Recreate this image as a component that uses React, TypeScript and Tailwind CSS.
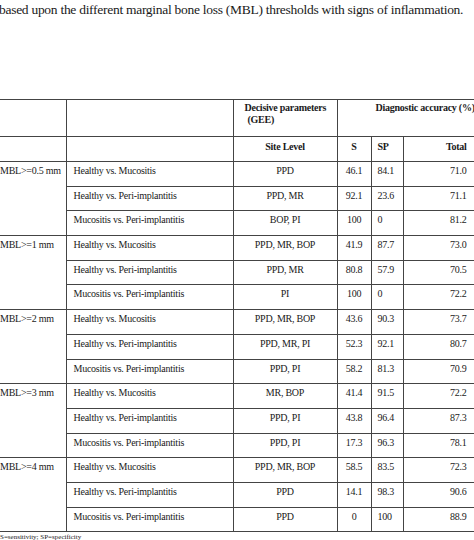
import React from "react";

type Row = [string, string, string, string, string];

const groups: { label: string; rows: Row[] }[] = [
  {
    label: "MBL>=0.5 mm",
    rows: [
      ["Healthy vs. Mucositis", "PPD", "46.1", "84.1", "71.0"],
      ["Healthy vs. Peri-implantitis", "PPD, MR", "92.1", "23.6", "71.1"],
      ["Mucositis vs. Peri-implantitis", "BOP, PI", "100", "0", "81.2"],
    ],
  },
  {
    label: "MBL>=1 mm",
    rows: [
      ["Healthy vs. Mucositis", "PPD, MR, BOP", "41.9", "87.7", "73.0"],
      ["Healthy vs. Peri-implantitis", "PPD, MR", "80.8", "57.9", "70.5"],
      ["Mucositis vs. Peri-implantitis", "PI", "100", "0", "72.2"],
    ],
  },
  {
    label: "MBL>=2 mm",
    rows: [
      ["Healthy vs. Mucositis", "PPD, MR, BOP", "43.6", "90.3", "73.7"],
      ["Healthy vs. Peri-implantitis", "PPD, MR, PI", "52.3", "92.1", "80.7"],
      ["Mucositis vs. Peri-implantitis", "PPD, PI", "58.2", "81.3", "70.9"],
    ],
  },
  {
    label: "MBL>=3 mm",
    rows: [
      ["Healthy vs. Mucositis", "MR, BOP", "41.4", "91.5", "72.2"],
      ["Healthy vs. Peri-implantitis", "PPD, PI", "43.8", "96.4", "87.3"],
      ["Mucositis vs. Peri-implantitis", "PPD, PI", "17.3", "96.3", "78.1"],
    ],
  },
  {
    label: "MBL>=4 mm",
    rows: [
      ["Healthy vs. Mucositis", "PPD, MR, BOP", "58.5", "83.5", "72.3"],
      ["Healthy vs. Peri-implantitis", "PPD", "14.1", "98.3", "90.6"],
      ["Mucositis vs. Peri-implantitis", "PPD", "0", "100", "88.9"],
    ],
  },
];

const line = "border-[#444]";

export default function App() {
  return (
    <div className="w-[474px] h-[540px] overflow-hidden bg-white text-[#1a1a1a] font-[family-name:Liberation_Serif,serif]">
      <p className="-ml-[1px] pt-[1px] text-[13.5px] leading-[17px] tracking-[-0.28px] whitespace-nowrap">
        based upon the different marginal bone loss (MBL) thresholds with signs of inflammation.
      </p>

      <table className="mt-[81px] w-[478px] table-fixed border-collapse text-[10px] leading-[12px] tracking-[-0.25px]">
        <colgroup>
          <col className="w-[66px]" />
          <col className="w-[167px]" />
          <col className="w-[104px]" />
          <col className="w-[34px]" />
          <col className="w-[32px]" />
          <col className="w-[75px]" />
        </colgroup>
        <thead className="font-bold">
          <tr className="h-[37px]">
            <th className={`border-t border-b ${line}`} />
            <th className={`border ${line}`} />
            <th className={`border ${line} align-top text-left pl-[11px] pt-[2px] font-bold`}>
              Decisive parameters
              <br />
              <span className="pl-[3px]">(GEE)</span>
            </th>
            <th colSpan={3} className={`border ${line} align-top text-left pl-[38px] pt-[2px] whitespace-nowrap`}>
              Diagnostic accuracy (%)
            </th>
          </tr>
          <tr className="h-[25px]">
            <th className={`border-b ${line}`} />
            <th className={`border ${line}`} />
            <th className={`border ${line} align-top text-center pt-[4px]`}>Site Level</th>
            <th className={`border ${line} align-top text-center pt-[4px]`}>S</th>
            <th className={`border ${line} align-top text-left pl-[6px] pt-[4px]`}>SP</th>
            <th className={`border ${line} align-top text-right pr-[11px] pt-[4px]`}>Total</th>
          </tr>
        </thead>
        <tbody>
          {groups.map((g) =>
            g.rows.map((r, i) => (
              <tr key={g.label + i} className="h-[24.7px]">
                {i === 0 && (
                  <td rowSpan={3} className={`border-b ${line} align-top pt-[3px] whitespace-nowrap`}>
                    {g.label}
                  </td>
                )}
                <td className={`border ${line} align-top pl-[7px] pt-[3px] whitespace-nowrap`}>{r[0]}</td>
                <td className={`border ${line} align-top text-center pt-[3px]`}>{r[1]}</td>
                <td className={`border ${line} align-top text-center pt-[3px]`}>{r[2]}</td>
                <td className={`border ${line} align-top text-left pl-[6px] pt-[3px]`}>{r[3]}</td>
                <td className={`border ${line} align-top text-right pr-[11px] pt-[3px]`}>{r[4]}</td>
              </tr>
            ))
          )}
        </tbody>
      </table>

      <p className="mt-[1px] text-[7px] leading-[8px] whitespace-nowrap">S=sensitivity; SP=specificity</p>
    </div>
  );
}
